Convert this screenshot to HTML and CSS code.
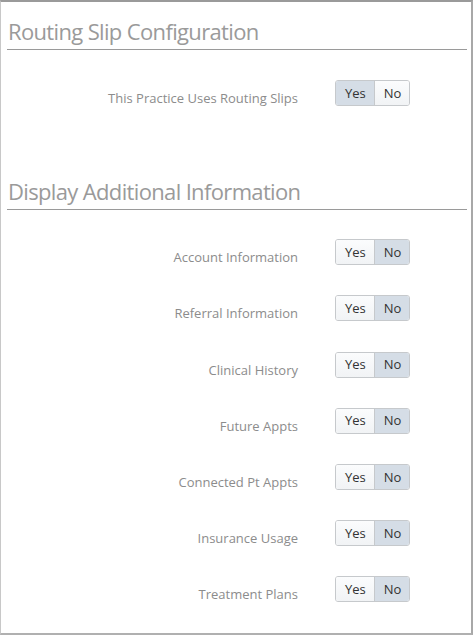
FILE: index.html
```html
<!DOCTYPE html>
<html>
<head>
<meta charset="utf-8">
<link rel="stylesheet" href="styles.css">
</head>
<body>
<div class="frame">
  <h2 class="section-title first">Routing Slip Configuration</h2>
  <div class="rows top-rows">
    <div class="row">
      <span class="label">This Practice Uses Routing Slips</span>
      <div class="toggle"><span class="opt active">Yes</span><span class="opt">No</span></div>
    </div>
  </div>
  <h2 class="section-title second">Display Additional Information</h2>
  <div class="rows">
    <div class="row">
      <span class="label">Account Information</span>
      <div class="toggle"><span class="opt">Yes</span><span class="opt active">No</span></div>
    </div>
    <div class="row">
      <span class="label">Referral Information</span>
      <div class="toggle"><span class="opt">Yes</span><span class="opt active">No</span></div>
    </div>
    <div class="row">
      <span class="label">Clinical History</span>
      <div class="toggle"><span class="opt">Yes</span><span class="opt active">No</span></div>
    </div>
    <div class="row">
      <span class="label">Future Appts</span>
      <div class="toggle"><span class="opt">Yes</span><span class="opt active">No</span></div>
    </div>
    <div class="row">
      <span class="label">Connected Pt Appts</span>
      <div class="toggle"><span class="opt">Yes</span><span class="opt active">No</span></div>
    </div>
    <div class="row">
      <span class="label">Insurance Usage</span>
      <div class="toggle"><span class="opt">Yes</span><span class="opt active">No</span></div>
    </div>
    <div class="row">
      <span class="label">Treatment Plans</span>
      <div class="toggle"><span class="opt">Yes</span><span class="opt active">No</span></div>
    </div>
  </div>
</div>
</body>
</html>
```
FILE: styles.css
```css
html, body {
  margin: 0;
  padding: 0;
  background: #fff;
}
.frame {
  box-sizing: border-box;
  width: 473px;
  height: 635px;
  border-top: 2px solid #9a9a9a;
  border-left: 1px solid #c8c8c8;
  border-right: 2px solid #a8a8a8;
  border-bottom: 2px solid #b0b0b0;
  font-family: "Open Sans", "Liberation Sans", sans-serif;
  overflow: hidden;
}
.section-title {
  margin: 0 4px 0 6px;
  padding: 0 0 3px 1px;
  font-size: 22px;
  font-weight: 400;
  letter-spacing: -0.65px;
  line-height: 30px;
  color: #9a9a9a;
  border-bottom: 1px solid #9a9a9a;
}
.section-title.first {
  margin-top: 14px;
}
.section-title.second {
  margin-top: 55px;
}
.rows {
  display: flex;
  flex-direction: column;
  margin-top: 14px;
}
.top-rows {
  margin-top: 15px;
}
.row {
  display: flex;
  align-items: center;
  height: 56.2px;
}
.label {
  width: 297px;
  box-sizing: border-box;
  text-align: right;
  font-size: 13px;
  color: #8c8c8c;
  padding-top: 10px;
  margin-right: 37px;
}
.toggle {
  display: flex;
  border: 1px solid #c6c9cc;
  border-radius: 3px;
  overflow: hidden;
  height: 26px;
  box-sizing: border-box;
}
.opt {
  display: flex;
  align-items: center;
  padding: 0 8px 1px 9px;
  font-size: 13px;
  color: #333;
  background: linear-gradient(#fbfcfd, #f1f3f5);
}
.opt + .opt {
  border-left: 1px solid #c6c9cc;
}
.opt.active {
  background: #d5dde6;
}
```
